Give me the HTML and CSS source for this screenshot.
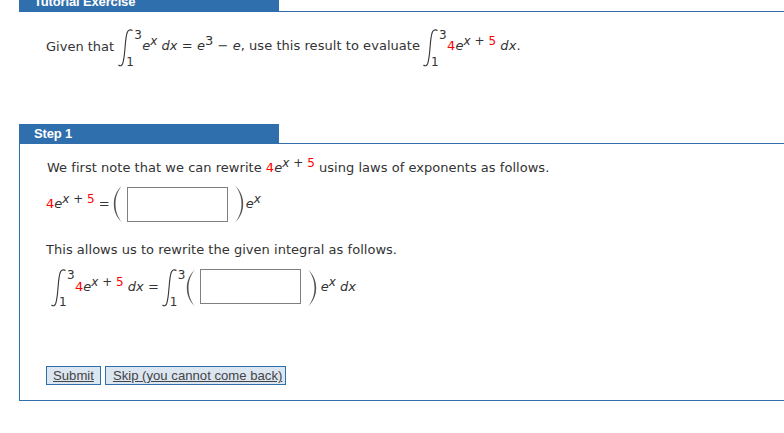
FILE: index.html
```html
<!DOCTYPE html>
<html lang="en">
<head>
    <meta charset="UTF-8">
    <meta name="viewport" content="width=device-width, initial-scale=1.0">
    <title>Tutorial Exercise</title>
    <link rel="stylesheet" href="styles.css">
</head>
<body>
    <div class="section-head first-head">
        <div class="section-title">Tutorial Exercise</div>
        <div class="section-rule"></div>
    </div>
    <div class="intro">
        <div class="math-row">
            <span class="lead">Given that</span>
            <span class="integral">
                <svg class="int-sign" viewBox="0 0 16 38"><path d="M.5 36c1.500 1.400 3.300 1 4.200-1.500 1-3 1.800-9 2.300-15.500.5-6.500 1.200-13 2.300-15.700.9-2.300 3-3 5.200-1.800"/></svg>
                <span class="limit-top">3</span>
                <span class="limit-bottom">1</span>
            </span>
            <span class="expr"><i>e<sup>x</sup></i>&nbsp;<i>dx</i> = <i>e</i><sup class="big-sup">3</sup> &minus; <i>e</i>, use this result to evaluate</span>
            <span class="integral after-text">
                <svg class="int-sign" viewBox="0 0 16 38"><path d="M.5 36c1.500 1.400 3.300 1 4.200-1.500 1-3 1.800-9 2.300-15.500.5-6.500 1.200-13 2.300-15.700.9-2.300 3-3 5.200-1.800"/></svg>
                <span class="limit-top">3</span>
                <span class="limit-bottom">1</span>
            </span>
            <span class="expr"><span class="red">4</span><i>e<sup>x</sup></i><sup> + <span class="red">5</span></sup>&nbsp;<i>dx</i>.</span>
        </div>
    </div>

    <div class="section-head">
        <div class="section-title">Step 1</div>
        <div class="section-rule"></div>
    </div>
    <div class="panel">
        <p class="line-one">We first note that we can rewrite <span class="red">4</span><i>e<sup>x</sup></i><sup> + <span class="red">5</span></sup>&nbsp;using laws of exponents as follows.</p>
        <div class="math-row answer-one">
            <span class="expr"><span class="red">4</span><i>e<sup>x</sup></i><sup> + <span class="red">5</span></sup>&nbsp;=</span>
            <svg class="paren" viewBox="0 0 10 38"><path d="M9 .5C3.500 5.500 .8 12 .8 19s2.700 13.500 8.200 18.500C4.500 32 2.500 26 2.500 19S4.500 6 9 .5z"/></svg>
            <input class="blank" type="text">
            <svg class="paren paren-right" viewBox="0 0 10 38"><path d="M1 .5C6.500 5.500 9.200 12 9.200 19s-2.700 13.500-8.200 18.500C5.500 32 7.500 26 7.500 19S5.500 6 1 .5z"/></svg>
            <span class="expr"><i>e<sup>x</sup></i></span>
        </div>
        <p class="line-two">This allows us to rewrite the given integral as follows.</p>
        <div class="math-row answer-two">
            <span class="integral">
                <svg class="int-sign" viewBox="0 0 16 38"><path d="M.5 36c1.500 1.400 3.300 1 4.200-1.500 1-3 1.800-9 2.300-15.500.5-6.500 1.200-13 2.300-15.700.9-2.300 3-3 5.200-1.800"/></svg>
                <span class="limit-top">3</span>
                <span class="limit-bottom">1</span>
            </span>
            <span class="expr"><span class="red">4</span><i>e<sup>x</sup></i><sup> + <span class="red">5</span></sup>&nbsp;<i>dx</i> =</span>
            <span class="integral second-int">
                <svg class="int-sign" viewBox="0 0 16 38"><path d="M.5 36c1.500 1.400 3.300 1 4.200-1.500 1-3 1.800-9 2.300-15.500.5-6.500 1.200-13 2.300-15.700.9-2.300 3-3 5.200-1.800"/></svg>
                <span class="limit-top">3</span>
                <span class="limit-bottom">1</span>
            </span>
            <svg class="paren paren-tight" viewBox="0 0 10 38"><path d="M9 .5C3.500 5.500 .8 12 .8 19s2.700 13.500 8.200 18.500C4.500 32 2.500 26 2.500 19S4.500 6 9 .5z"/></svg>
            <input class="blank" type="text">
            <svg class="paren paren-right" viewBox="0 0 10 38"><path d="M1 .5C6.500 5.500 9.200 12 9.200 19s-2.700 13.500-8.200 18.500C5.500 32 7.500 26 7.500 19S5.500 6 1 .5z"/></svg>
            <span class="expr"><i>e<sup>x</sup></i>&nbsp;<i>dx</i></span>
        </div>
        <div class="buttons">
            <button class="btn" type="button">Submit</button>
            <button class="btn btn-skip" type="button">Skip (you cannot come back)</button>
        </div>
    </div>
</body>
</html>
```

FILE: styles.css
```css
html, body {
    overflow: hidden;
}

body {
    margin: 0;
    height: 433px;
    padding-left: 19px;
    background-color: #fff;
    color: #333;
    font-family: "DejaVu Sans", Verdana, sans-serif;
    font-size: 13px;
}

.section-head {
    display: flex;
    align-items: flex-end;
    margin-right: -10px;
}

.first-head {
    margin-top: -8px;
}

.section-title {
    width: 245px;
    height: 20px;
    padding-left: 15px;
    background-color: #2f6fad;
    color: #fff;
    font-family: "Liberation Sans", Arial, sans-serif;
    font-size: 13px;
    font-weight: bold;
    letter-spacing: -.15px;
    line-height: 20px;
}

.section-rule {
    flex: 1;
    border-bottom: 1px solid #2f6fad;
}

.intro {
    height: 112px;
    padding: 17px 0 0 27px;
    box-sizing: border-box;
}

.intro .lead, .intro .expr {
    padding-bottom: 4px;
}

.intro .expr {
    letter-spacing: .05px;
}

.math-row {
    display: flex;
    align-items: center;
    height: 38px;
    white-space: nowrap;
}

.lead {
    margin-right: 4px;
}

.integral {
    position: relative;
    flex: none;
    width: 24px;
    height: 38px;
}

.int-sign {
    display: block;
    width: 16px;
    height: 38px;
}

.int-sign path {
    fill: none;
    stroke: #333;
    stroke-width: 1.100;
}

.paren path {
    fill: #555;
}

.limit-top, .limit-bottom {
    position: absolute;
    font-size: 12px;
    line-height: 13px;
}

.limit-top {
    top: 0;
    left: 16px;
}

.limit-bottom {
    bottom: -2px;
    left: 8px;
}

.expr {
    line-height: 20px;
}

.after-text {
    margin-left: 3px;
}

.second-int {
    margin-left: 3px;
}

sup {
    font-size: 12px;
    line-height: 0;
    vertical-align: 5px;
}

.big-sup {
    font-size: 13px;
}

.red {
    color: #f00;
}

.panel {
    height: 257px;
    margin-right: -10px;
    padding: 0 0 0 26px;
    border-left: 1px solid #2f6fad;
    border-bottom: 1px solid #2f6fad;
    box-sizing: border-box;
}

.panel p {
    margin: 0;
    letter-spacing: .03px;
    line-height: 20px;
}

.line-one {
    padding: 14px 0 0 1px;
}

.answer-one {
    margin-top: 7px;
}

.paren {
    flex: none;
    width: 10px;
    height: 38px;
    margin-left: 3px;
}

.paren-tight {
    margin-left: 0;
}

.paren-right {
    margin: 0 2px 0 6px;
}

.blank {
    flex: none;
    width: 101px;
    height: 35px;
    margin: 0 0 0 4px;
    padding: 0;
    border: 1px solid #808080;
    box-sizing: border-box;
    background-color: #fff;
}

.panel .line-two {
    margin-top: 17px;
}

.answer-two {
    margin-top: 9px;
    padding-left: 5px;
}

.answer-two .expr {
    padding-bottom: 2px;
}

.answer-two .blank {
    align-self: flex-start;
}

.answer-two .paren-right {
    margin-right: 4px;
}

.buttons {
    display: flex;
    gap: 4px;
    margin-top: 59px;
}

.btn {
    height: 19px;
    padding: 0 6px;
    border: 1px solid #2f6fad;
    background-color: #dce6f1;
    color: #444;
    font-family: "Liberation Sans", Arial, sans-serif;
    font-size: 13.15px;
    line-height: 15px;
    text-decoration: underline;
    cursor: pointer;
}

.btn-skip {
    padding: 0 3px 0 7px;
}
```
